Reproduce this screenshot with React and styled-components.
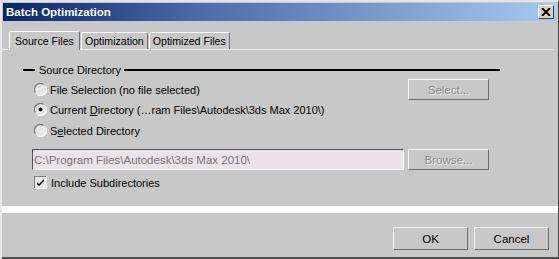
import React from 'react';
import styled, { createGlobalStyle } from 'styled-components';

const GlobalStyle = createGlobalStyle`
  html, body {
    margin: 0;
    padding: 0;
    background: #c8c8c8;
  }
  body {
    font-family: "Liberation Sans", Arial, sans-serif;
    font-size: 11px;
    color: #000;
  }
`

const Window = styled.div`
  box-sizing: border-box;
  width: 559px;
  height: 259px;
  background: #c8c8c8;
  border-top: 2px solid #e4e4e4;
  border-left: 2px solid #e8e8e8;
  border-right: 1px solid #404040;
  display: flex;
  flex-direction: column;
  overflow: hidden;
`

const TitleBar = styled.div`
  height: 18px;
  margin: 1px 2px 0 1px;
  padding: 0 2px 0 3px;
  display: flex;
  align-items: center;
  justify-content: space-between;
  background: linear-gradient(to right, #0a246a 0%, #4a6aaa 35%, #a6caf0 100%);
  color: #fff;
  font-weight: bold;
  font-size: 11.5px;
`

const CloseButton = styled.div`
  box-sizing: border-box;
  width: 16px;
  height: 14px;
  background: #d4d0c8;
  border: 1px solid;
  border-color: #fff #404040 #404040 #fff;
  display: flex;
  align-items: center;
  justify-content: center;
`

const TabStrip = styled.div`
  display: flex;
  align-items: flex-end;
  height: 19px;
  margin-top: 9px;
  padding-left: 7px;
`

const Tab = styled.div`
  box-sizing: border-box;
  height: ${p => (p.$active ? '19px' : '17px')};
  padding: 0 ${p => (p.$active ? '5px' : '3px')};
  margin-right: 1px;
  display: flex;
  align-items: center;
  font-size: 10.6px;
  border: 1px solid;
  border-bottom: none;
  border-color: #fff #707070 transparent #fff;
  border-radius: 2px 2px 0 0;
  background: #c8c8c8;
  margin-bottom: ${p => (p.$active ? '-1px' : '0')};
  position: relative;
  z-index: ${p => (p.$active ? 1 : 0)};
`

const Panel = styled.div`
  height: 156px;
  margin-right: 5px;
  border-top: 1px solid #f0f0f0;
  display: flex;
  flex-direction: column;
`

const GroupHeader = styled.div`
  display: flex;
  align-items: center;
  height: 14px;
  margin: 13px 0 0 21px;
  width: 477px;
  &::before, &::after {
    content: "";
    height: 2px;
    background: #000;
  }
  &::before {
    width: 12px;
    margin-right: 4px;
  }
  &::after {
    flex: 1;
    margin-left: 3px;
  }
`

const Rows = styled.div`
  display: grid;
  grid-template-columns: 372px 81px;
  column-gap: 4px;
  margin-left: 30px;
`

const Row = styled.div`
  grid-column: ${p => (p.$span ? '1 / 3' : 'auto')};
  height: ${p => p.$h}px;
  margin-top: ${p => p.$mt || 0}px;
  display: flex;
  align-items: center;
  padding-left: 2px;
`

const Cell = styled.div`
  height: ${p => p.$h}px;
  margin-top: ${p => p.$mt || 0}px;
  display: flex;
  align-items: center;
`

const Option = styled.label`
  display: flex;
  align-items: center;
  gap: ${p => p.$gap || 3}px;
  white-space: nowrap;
  svg {
    flex: none;
  }
`

const PushButton = styled.div`
  box-sizing: border-box;
  width: ${p => p.$w || 81}px;
  height: ${p => p.$h || 21}px;
  display: flex;
  align-items: center;
  justify-content: center;
  border: 1px solid;
  border-color: #f4f4f4 #6c6c6c #6c6c6c #f4f4f4;
  color: ${p => (p.$disabled ? '#8a8a8a' : '#000')};
  text-shadow: ${p => (p.$disabled ? '1px 1px 0 #f0f0f0' : 'none')};
  font-size: 11.5px;
`

const TextField = styled.div`
  box-sizing: border-box;
  width: 372px;
  height: 21px;
  background: #e8e4e8;
  border: 1px solid;
  border-color: #505050 #fff #fff #505050;
  color: #787878;
  font-size: 11.5px;
  padding-left: 1px;
  display: flex;
  align-items: center;
`

const WhiteBand = styled.div`
  height: 7px;
  margin-left: -2px;
  margin-right: -1px;
  background: #fff;
`

const Footer = styled.div`
  flex: 1;
  margin-left: -1px;
  border-left: 1px solid #fff;
  border-bottom: 2px solid #505050;
  display: flex;
  justify-content: flex-end;
  align-items: flex-start;
  gap: 6px;
  padding: 14px 9px 0 0;
`

const Radio = ({ checked }) => (
  <svg width="13" height="13" viewBox="0 0 13 13">
    <circle cx="6.5" cy="6.5" r="6" fill="#e6e6e6" />
    <path d="M1.3 9.5 A6 6 0 0 1 9.5 1.3" stroke="#7a7a7a" strokeWidth="1.2" fill="none" />
    <path d="M3.5 11.7 A6 6 0 0 0 11.7 3.5" stroke="#ffffff" strokeWidth="1.2" fill="none" />
    {checked && <circle cx="6.5" cy="6.5" r="2" fill="#000" />}
  </svg>
)

const Checkbox = () => (
  <svg width="13" height="13" viewBox="0 0 13 13">
    <rect x="0" y="0" width="13" height="13" fill="#fff" />
    <rect x="0" y="0" width="12" height="12" fill="#808080" />
    <rect x="1" y="1" width="11" height="11" fill="#e8e8e8" />
    <path d="M3 6 L5 8 L10 3 L10 5 L5 10 L3 8 Z" fill="#000" />
  </svg>
)

const App = () => {
  return (
    <>
      <GlobalStyle />
      <Window>
        <TitleBar>
          <span>Batch Optimization</span>
          <CloseButton>
            <svg width="10" height="8" viewBox="0 0 10 8">
              <path d="M1 0 L9 8 M9 0 L1 8" stroke="#000" strokeWidth="1.8" />
            </svg>
          </CloseButton>
        </TitleBar>

        <TabStrip>
          <Tab $active>Source Files</Tab>
          <Tab>Optimization</Tab>
          <Tab>Optimized Files</Tab>
        </TabStrip>

        <Panel>
          <GroupHeader>Source Directory</GroupHeader>
          <Rows>
            <Row $h={21} $mt={2}>
              <Option><Radio /><span>File Selection (no file selected)</span></Option>
            </Row>
            <Cell $h={21} $mt={2}>
              <PushButton $disabled>Select...</PushButton>
            </Cell>
            <Row $span $h={19}>
              <Option>
                <Radio checked />
                <span>Current <u>D</u>irectory (…ram Files\Autodesk\3ds Max 2010\)</span>
              </Option>
            </Row>
            <Row $span $h={19} $mt={2}>
              <Option>
                <Radio />
                <span>S<u>e</u>lected Directory</span>
              </Option>
            </Row>
            <Cell $h={21} $mt={9}>
              <TextField>C:\Program Files\Autodesk\3ds Max 2010\</TextField>
            </Cell>
            <Cell $h={21} $mt={9}>
              <PushButton $disabled>Browse...</PushButton>
            </Cell>
            <Row $span $h={15} $mt={5}>
              <Option $gap={4}><Checkbox /><span>Include Subdirectories</span></Option>
            </Row>
          </Rows>
        </Panel>

        <WhiteBand />

        <Footer>
          <PushButton $w={75} $h={23}>OK</PushButton>
          <PushButton $w={75} $h={23}>Cancel</PushButton>
        </Footer>
      </Window>
    </>
  )
}

export default App;
